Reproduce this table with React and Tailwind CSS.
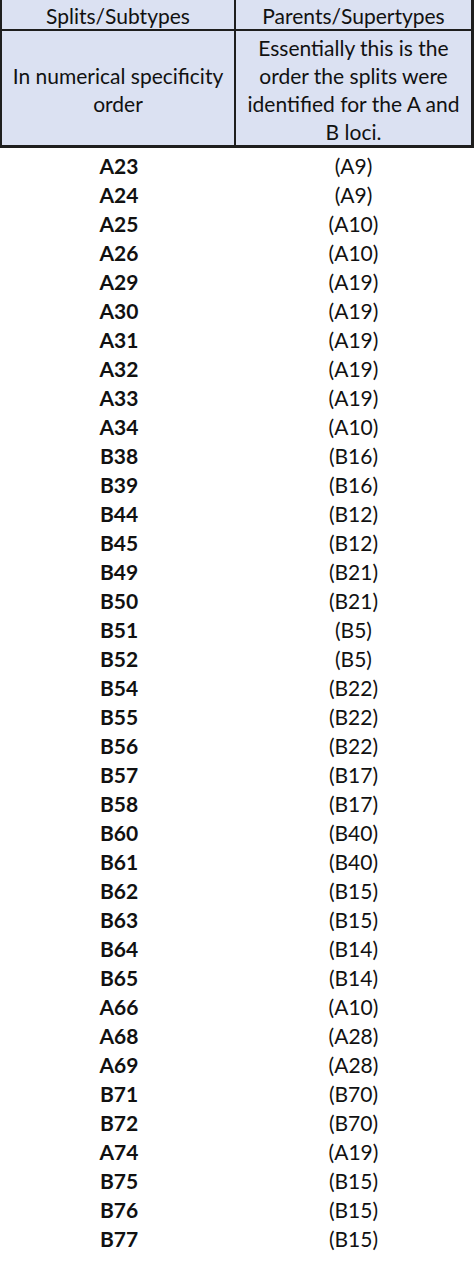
import React from 'react';

const rows = [
  ['A23', '(A9)'],
  ['A24', '(A9)'],
  ['A25', '(A10)'],
  ['A26', '(A10)'],
  ['A29', '(A19)'],
  ['A30', '(A19)'],
  ['A31', '(A19)'],
  ['A32', '(A19)'],
  ['A33', '(A19)'],
  ['A34', '(A10)'],
  ['B38', '(B16)'],
  ['B39', '(B16)'],
  ['B44', '(B12)'],
  ['B45', '(B12)'],
  ['B49', '(B21)'],
  ['B50', '(B21)'],
  ['B51', '(B5)'],
  ['B52', '(B5)'],
  ['B54', '(B22)'],
  ['B55', '(B22)'],
  ['B56', '(B22)'],
  ['B57', '(B17)'],
  ['B58', '(B17)'],
  ['B60', '(B40)'],
  ['B61', '(B40)'],
  ['B62', '(B15)'],
  ['B63', '(B15)'],
  ['B64', '(B14)'],
  ['B65', '(B14)'],
  ['A66', '(A10)'],
  ['A68', '(A28)'],
  ['A69', '(A28)'],
  ['B71', '(B70)'],
  ['B72', '(B70)'],
  ['A74', '(A19)'],
  ['B75', '(B15)'],
  ['B76', '(B15)'],
  ['B77', '(B15)'],
];

export default function App() {
  return (
    <div className="w-[474px] min-h-[1264px] bg-white text-[#111] font-['Lato',_'Open_Sans',_sans-serif]">
      {/* header block */}
      <div className="border-l-2 border-r-[3px] border-b-[3px] border-[#1e1e1e] bg-[#dbe1f2]">
        <div className="grid grid-cols-[234px_1fr] border-b-2 border-[#1e1e1e] h-[31px]">
          <div className="border-r-2 border-[#1e1e1e] flex items-center justify-center text-[21px] leading-none pt-[2px]">
            Splits/Subtypes
          </div>
          <div className="flex items-center justify-center text-[21px] leading-none pt-[2px]">
            Parents/Supertypes
          </div>
        </div>
        <div className="grid grid-cols-[234px_1fr] h-[114px]">
          <div className="border-r-2 border-[#1e1e1e] flex items-center justify-center text-center text-[21px] leading-[28px] pt-[2px]">
            In numerical specificity
            <br />
            order
          </div>
          <div className="flex items-center justify-center text-center text-[21px] leading-[28px] pt-[3px]">
            <div>
              Essentially this is the
              <br />
              order the splits were
              <br />
              identified for the A and
              <br />
              B loci.
            </div>
          </div>
        </div>
      </div>

      {/* rows */}
      <div className="pt-[2px] pr-[3px] pl-[2px]">
        {rows.map(([split, parent]) => (
          <div key={split} className="grid grid-cols-[234px_1fr] h-[29px] items-center text-[21px]">
            <div className="text-center font-bold">{split}</div>
            <div className="text-center">{parent}</div>
          </div>
        ))}
      </div>
    </div>
  );
}
